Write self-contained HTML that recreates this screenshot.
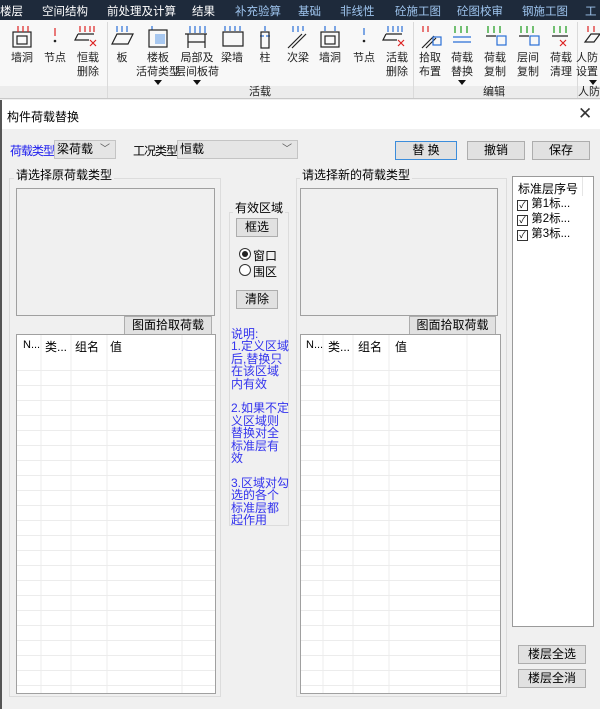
<!DOCTYPE html>
<html><head><meta charset="utf-8"><style>
*{margin:0;padding:0;box-sizing:border-box}
body{width:600px;height:709px;overflow:hidden;background:#f0f0f0;font-family:"Liberation Sans","Noto Sans CJK SC",sans-serif;font-size:12px;color:#000;position:relative}
.a{position:absolute}
.menu{left:0;top:0;width:600px;height:20px;background:#1e2a3b}
.menu span{position:absolute;top:3px;font-size:11.5px;color:#fff}
.menu span.b{color:#9ec4ee}
.rib{left:0;top:20px;width:600px;height:66px;background:#f8f8f8}
.rg{left:0;top:86px;width:600px;height:13px;background:#ececec;border-bottom:1px solid #c8c8c8}
.lb{position:absolute;font-size:11px;text-align:center;width:40px;line-height:14px;color:#222}
.sep{position:absolute;top:22px;width:1px;height:76px;background:#dadada}
.tri{position:absolute;top:80px;width:0;height:0;border-left:4px solid transparent;border-right:4px solid transparent;border-top:5px solid #111}
.dlg{left:0;top:100px;width:600px;height:609px;background:#f0f0f0;border-left:2px solid #555}
.title{left:2px;top:100px;width:598px;height:29px;background:#fff}
.btn{position:absolute;background:#e1e1e1;border:1px solid #adadad;text-align:center;font-size:12px;line-height:17px}
.combo{position:absolute;background:#e5e5e5;border:1px solid #c4c4c4;height:19px;font-size:12px;line-height:17px;padding-left:2px}
.combo i{position:absolute;right:5px;top:0;font-style:normal;font-size:10px;color:#555}
.grp{position:absolute;border:1px solid #dcdcdc}
.gl{position:absolute;background:#f0f0f0;padding:0 2px;font-size:12px}
.gray{position:absolute;background:#f0f0f0;border:1px solid #a0a0a0}
.list{position:absolute;background:#fff;border:1px solid #a0a0a0;overflow:hidden}
.note{position:absolute;color:#3333ee;font-size:12px;line-height:12.4px}
</style></head><body>
<div class="a menu">
<span style="left:0">楼层</span><span style="left:42px">空间结构</span><span style="left:107px">前处理及计算</span><span style="left:192px">结果</span><span class="b" style="left:235px">补充验算</span><span class="b" style="left:298px">基础</span><span class="b" style="left:340px">非线性</span><span class="b" style="left:395px">砼施工图</span><span class="b" style="left:457px">砼图校审</span><span class="b" style="left:522px">钢施工图</span><span class="b" style="left:585px">工具</span>
</div>
<div class="a rib"></div>
<div class="a rg"></div>
<div class="sep" style="left:107px"></div><div class="sep" style="left:413px"></div><div class="sep" style="left:577px"></div>
<svg class="a" style="left:0;top:24px" width="600" height="26" fill="none" stroke-width="1.2">
<g stroke="#222"><rect x="13" y="8" width="18" height="15"/><rect x="17" y="12" width="10" height="8"/></g>
<g stroke="#d22"><path d="M18 2v6M23 2v6M28 2v6"/><path d="M55 4v8"/></g><circle cx="55" cy="17" r="1.3" fill="#222"/>
<g stroke="#d22"><path d="M80 2v6M85 2v6M90 2v6M94 2v6"/><path d="M90 16l6 6M96 16l-6 6"/></g><path d="M78 10h16M78 10l-3 6h14" stroke="#222"/>
<g stroke="#2a6fd6"><path d="M117 2v6M122 2v6M127 2v6"/><path d="M152 2v4"/><path d="M190 2v7M195 2v7M200 2v7M205 2v7"/><path d="M225 2v5M230 2v5M235 2v5M240 2v5"/><path d="M265 2v5M260 12h4M270 12h-4"/><path d="M293 2v6M298 2v6M303 2v5"/><path d="M325 2v5M335 2v5"/><path d="M364 4v7"/><path d="M388 2v6M393 2v6M398 2v6M402 2v6"/></g>
<g stroke="#222"><path d="M112 20l5-10h16l-5 10z"/><rect x="149" y="6" width="18" height="17"/><path d="M185 10h22M188 10v14M205 10v14M188 18h17"/><path d="M223 8h20v14h-20z"/><rect x="261" y="8" width="8" height="16"/><path d="M288 24l14-14M292 24l14-14"/><rect x="321" y="8" width="18" height="15"/><rect x="325" y="12" width="10" height="8"/><path d="M386 10h16M386 10l-3 6h14"/></g>
<rect x="155" y="10" width="10" height="10" fill="#a8c8f0"/><circle cx="364" cy="17" r="1.3" fill="#222"/>
<path d="M398 16l6 6M404 16l-6 6" stroke="#d22"/>
<g stroke="#d22"><path d="M423 2v6M428 2v6"/><path d="M588 2v6M594 2v6"/><path d="M560 16l6 6M566 16l-6 6"/></g>
<path d="M422 24l12-12M426 24l10-10" stroke="#222"/><rect x="433" y="13" width="8" height="8" stroke="#2a6fd6"/>
<g stroke="#1a9a1a"><path d="M455 2v7M461 2v7M467 2v7"/><path d="M488 2v7M494 2v7M500 2v7"/><path d="M521 2v7M527 2v7M533 2v7"/><path d="M554 2v7M560 2v7M566 2v7"/></g>
<g stroke="#2a6fd6"><path d="M453 13h18M453 18h18"/><rect x="497" y="12" width="9" height="9"/><rect x="530" y="12" width="9" height="9"/></g>
<g stroke="#222"><path d="M486 12h10M519 12h10M552 12h16M585 18l6-8h9l-6 8z"/></g>
</svg>
<div class="lb" style="left:2px;top:51px">墙洞</div>
<div class="lb" style="left:35px;top:51px">节点</div>
<div class="lb" style="left:68px;top:51px">恒载<br>删除</div>
<div class="lb" style="left:102px;top:51px">板</div>
<div class="lb" style="left:133px;top:51px;width:50px">楼板<br>活荷类型</div>
<div class="lb" style="left:172px;top:51px;width:50px">局部及<br>层间板荷</div>
<div class="lb" style="left:212px;top:51px">梁墙</div>
<div class="lb" style="left:245px;top:51px">柱</div>
<div class="lb" style="left:278px;top:51px">次梁</div>
<div class="lb" style="left:310px;top:51px">墙洞</div>
<div class="lb" style="left:344px;top:51px">节点</div>
<div class="lb" style="left:377px;top:51px">活载<br>删除</div>
<div class="lb" style="left:410px;top:51px">拾取<br>布置</div>
<div class="lb" style="left:442px;top:51px">荷载<br>替换</div>
<div class="lb" style="left:475px;top:51px">荷载<br>复制</div>
<div class="lb" style="left:508px;top:51px">层间<br>复制</div>
<div class="lb" style="left:541px;top:51px">荷载<br>清理</div>
<div class="lb" style="left:576px;top:51px;text-align:left">人防<br>设置</div>
<div class="tri" style="left:154px"></div><div class="tri" style="left:193px"></div><div class="tri" style="left:458px"></div><div class="tri" style="left:589px"></div>
<div class="lb" style="left:240px;top:85px">活载</div>
<div class="lb" style="left:474px;top:85px">编辑</div>
<div class="lb" style="left:578px;top:85px;text-align:left">人防</div>
<div class="a dlg"></div>
<div class="a title"></div>
<div class="a" style="left:7px;top:108px;font-size:12px">构件荷载替换</div>
<div class="a" style="left:578px;top:104px;font-size:17px;color:#333">✕</div>

<div class="a" style="left:10px;top:142px;color:#2020ee;letter-spacing:-1px">荷载类型</div>
<div class="combo" style="left:54px;top:140px;width:62px">梁荷载<i>﹀</i></div>
<div class="a" style="left:133px;top:142px;letter-spacing:-1px">工况类型</div>
<div class="combo" style="left:177px;top:140px;width:121px">恒载<i>﹀</i></div>
<div class="btn" style="left:395px;top:141px;width:62px;border:1px solid #3c8ddb">替 换</div>
<div class="btn" style="left:467px;top:141px;width:58px">撤销</div>
<div class="btn" style="left:532px;top:141px;width:58px">保存</div>

<div class="grp" style="left:9px;top:178px;width:212px;height:519px"></div>
<div class="gl" style="left:14px;top:166px">请选择原荷载类型</div>
<div class="gray" style="left:16px;top:188px;width:199px;height:128px"></div>
<div class="btn" style="left:124px;top:316px;width:88px;height:19px">图面拾取荷载</div>
<div class="list" style="left:16px;top:334px;width:200px;height:360px">
<svg width="200" height="360"><g stroke="#ececec"><path d="M24 0v360M54 0v360M90 0v360M165 0v360"/>
<path d="M0 35.5h200M0 50.5h200M0 65.5h200M0 80.5h200M0 95.5h200M0 110.5h200M0 125.5h200M0 140.5h200M0 155.5h200M0 170.5h200M0 185.5h200M0 200.5h200M0 215.5h200M0 230.5h200M0 245.5h200M0 260.5h200M0 275.5h200M0 290.5h200M0 305.5h200M0 320.5h200M0 335.5h200M0 350.5h200"/></g></svg>
<div class="a" style="left:6px;top:4px;font-size:11px">N...</div><div class="a" style="left:28px;top:3px">类...</div><div class="a" style="left:58px;top:3px">组名</div><div class="a" style="left:93px;top:3px">值</div>
</div>

<div class="grp" style="left:229px;top:212px;width:60px;height:314px"></div>
<div class="gl" style="left:233px;top:199px">有效区域</div>
<div class="btn" style="left:236px;top:218px;width:42px;height:19px">框选</div>
<div class="a" style="left:239px;top:248px;width:12px;height:12px;border:1px solid #333;border-radius:50%;background:#fff"><div class="a" style="left:2px;top:2px;width:6px;height:6px;border-radius:50%;background:#222"></div></div>
<div class="a" style="left:253px;top:247px">窗口</div>
<div class="a" style="left:239px;top:264px;width:12px;height:12px;border:1px solid #333;border-radius:50%;background:#fff"></div>
<div class="a" style="left:253px;top:263px">围区</div>
<div class="btn" style="left:236px;top:290px;width:42px;height:19px">清除</div>
<div class="note" style="left:231px;top:328px">说明:<br>1.定义区域<br>后,替换只<br>在该区域<br>内有效<br><br>2.如果不定<br>义区域则<br>替换对全<br>标准层有<br>效<br><br>3.区域对勾<br>选的各个<br>标准层都<br>起作用</div>

<div class="grp" style="left:296px;top:178px;width:211px;height:519px"></div>
<div class="gl" style="left:300px;top:166px">请选择新的荷载类型</div>
<div class="gray" style="left:300px;top:188px;width:198px;height:128px"></div>
<div class="btn" style="left:409px;top:316px;width:87px;height:19px">图面拾取荷载</div>
<div class="list" style="left:300px;top:334px;width:201px;height:360px">
<svg width="201" height="360"><g stroke="#ececec"><path d="M22 0v360M52 0v360M88 0v360M166 0v360"/>
<path d="M0 35.5h200M0 50.5h200M0 65.5h200M0 80.5h200M0 95.5h200M0 110.5h200M0 125.5h200M0 140.5h200M0 155.5h200M0 170.5h200M0 185.5h200M0 200.5h200M0 215.5h200M0 230.5h200M0 245.5h200M0 260.5h200M0 275.5h200M0 290.5h200M0 305.5h200M0 320.5h200M0 335.5h200M0 350.5h200"/></g></svg>
<div class="a" style="left:5px;top:4px;font-size:11px">N...</div><div class="a" style="left:27px;top:3px">类...</div><div class="a" style="left:57px;top:3px">组名</div><div class="a" style="left:94px;top:3px">值</div>
</div>

<div class="list" style="left:512px;top:176px;width:82px;height:451px;border-color:#9a9a9a">
<div class="a" style="left:5px;top:3px">标准层序号</div>
<div class="a" style="left:69px;top:0;width:1px;height:19px;background:#e5e5e5"></div>
<div class="a" style="left:4px;top:20px;line-height:15px;font-size:11.5px">
<div><span style="display:inline-block;width:11px;height:11px;border:1px solid #333;vertical-align:-1px;font-size:9px;line-height:9px;text-align:center">✓</span> 第1标...</div>
<div><span style="display:inline-block;width:11px;height:11px;border:1px solid #333;vertical-align:-1px;font-size:9px;line-height:9px;text-align:center">✓</span> 第2标...</div>
<div><span style="display:inline-block;width:11px;height:11px;border:1px solid #333;vertical-align:-1px;font-size:9px;line-height:9px;text-align:center">✓</span> 第3标...</div>
</div></div>
<div class="btn" style="left:518px;top:645px;width:68px;height:19px">楼层全选</div>
<div class="btn" style="left:518px;top:669px;width:68px;height:19px">楼层全消</div>
</body></html>
